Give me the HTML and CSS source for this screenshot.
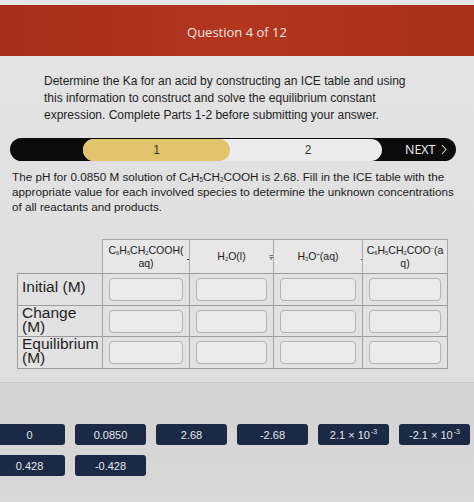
FILE: index.html
```html
<!DOCTYPE html>
<html>
<head>
<meta charset="utf-8">
<link rel="stylesheet" href="styles.css">
</head>
<body>
<div class="page">
  <div class="topstrip"></div>
  <header class="titlebar">Question 4 of 12</header>
  <p class="intro">Determine the Ka for an acid by constructing an ICE table and using this information to construct and solve the equilibrium constant expression. Complete Parts 1-2 before submitting your answer.</p>
  <div class="progress">
    <div class="steps">
      <div class="step active">1</div>
      <div class="step">2</div>
    </div>
    <div class="next">NEXT <svg class="chev" width="6" height="11" viewBox="0 0 6 11"><path d="M1 1 L5 5.5 L1 10" fill="none" stroke="#d8d8d8" stroke-width="1.1"/></svg></div>
  </div>
  <p class="prompt">The pH for 0.0850 M solution of C<sub>6</sub>H<sub>5</sub>CH<sub>2</sub>COOH is 2.68. Fill in the ICE table with the appropriate value for each involved species to determine the unknown concentrations of all reactants and products.</p>
  <div class="ice">
    <div class="blank"></div>
    <div class="hcell"><span class="sp">C<sub>6</sub>H<sub>5</sub>CH<sub>2</sub>COOH(<br>aq)</span><span class="op op-plus">+</span></div>
    <div class="hcell"><span class="sp">H<sub>2</sub>O(l)</span><span class="op op-eq">&#x21CC;</span></div>
    <div class="hcell"><span class="sp">H<sub>3</sub>O<sup>+</sup>(aq)</span><span class="op op-plus2">+</span></div>
    <div class="hcell"><span class="sp">C<sub>6</sub>H<sub>5</sub>CH<sub>2</sub>COO<sup>&minus;</sup>(a<br>q)</span></div>

    <div class="label first">Initial (M)</div>
    <div class="cell"><div class="box"></div></div>
    <div class="cell"><div class="box"></div></div>
    <div class="cell"><div class="box"></div></div>
    <div class="cell"><div class="box"></div></div>

    <div class="label">Change (M)</div>
    <div class="cell"><div class="box"></div></div>
    <div class="cell"><div class="box"></div></div>
    <div class="cell"><div class="box"></div></div>
    <div class="cell"><div class="box"></div></div>

    <div class="label">Equilibrium (M)</div>
    <div class="cell"><div class="box"></div></div>
    <div class="cell"><div class="box"></div></div>
    <div class="cell"><div class="box"></div></div>
    <div class="cell"><div class="box"></div></div>
  </div>
  <div class="bank">
    <div class="tiles">
      <div class="tile">0</div>
      <div class="tile">0.0850</div>
      <div class="tile">2.68</div>
      <div class="tile">-2.68</div>
      <div class="tile">2.1 &times; 10<sup>-3</sup></div>
      <div class="tile">-2.1 &times; 10<sup>-3</sup></div>
      <div class="tile">0.428</div>
      <div class="tile">-0.428</div>
    </div>
  </div>
</div>
</body>
</html>
```

FILE: styles.css
```css
html, body {
  margin: 0;
  padding: 0;
}
body {
  width: 474px;
  height: 502px;
  overflow: hidden;
  background: #dfdfdf;
  font-family: "Liberation Sans", Arial, sans-serif;
  color: #222;
}
.page {
  width: 474px;
  height: 502px;
  display: flex;
  flex-direction: column;
  background: linear-gradient(#e4e4e4, #dcdcdc);
}
.topstrip {
  height: 5px;
  background: #e6e6e6;
}
.titlebar {
  height: 51px;
  background: linear-gradient(90deg, #a62e1b, #b3361f 50%, #a83019);
  color: #f1e6e2;
  font-family: "Open Sans", "Liberation Sans", sans-serif;
  font-size: 13px;
  display: flex;
  align-items: center;
  justify-content: center;
  padding: 3px 0 0 0;
  box-sizing: border-box;
}
.intro {
  margin: 17px 0 0 44px;
  width: 370px;
  font-size: 12px;
  line-height: 17px;
  color: #1e1e1e;
}
.progress {
  margin: 14px 0 0 10px;
  width: 446px;
  height: 23px;
  background: #0c0c0c;
  border-radius: 12px;
  display: flex;
  align-items: center;
  box-sizing: border-box;
  padding-left: 73px;
}
.steps {
  display: flex;
  height: 22px;
  width: 299px;
  background: #ececec;
  border-radius: 11px;
}
.step {
  flex: 0 0 153px;
  display: flex;
  align-items: center;
  justify-content: center;
  font-size: 12px;
  color: #333;
  padding-left: 3px;
  box-sizing: border-box;
}
.step.active {
  flex: 0 0 147px;
  background: #e1c46c;
  border-radius: 11px;
  padding-left: 0;
}
.next {
  margin-left: 23px;
  color: #f4f4f4;
  font-size: 12.5px;
  font-family: "Open Sans", "Liberation Sans", sans-serif;
  display: flex;
  align-items: center;
  gap: 6px;
}
.chev {
  display: block;
}
.prompt {
  margin: 8px 0 0 12px;
  width: 444px;
  font-size: 11.7px;
  line-height: 15px;
  color: #1c1c1c;
}
sub, sup {
  font-size: 0.55em;
  line-height: 0;
  vertical-align: baseline;
  position: relative;
}
sub {
  top: 1px;
}
sup {
  top: -4px;
}
.ice {
  margin: 25px 0 0 17px;
  display: grid;
  grid-template-columns: 85px 87px 84px 89px 86px;
  grid-template-rows: 35px 32px 31px 32px;
  width: 432px;
}
.blank {
  border-bottom: 1px solid #9c9c9c;
}
.hcell {
  position: relative;
  background: #e7e7e7;
  border-top: 1px solid #a8a8a8;
  border-left: 1px solid #a8a8a8;
  border-bottom: 1px solid #9c9c9c;
  display: flex;
  align-items: center;
  justify-content: center;
  text-align: center;
  font-size: 10.5px;
  line-height: 13px;
  color: #222;
}
.hcell:nth-child(5) {
  border-right: 1px solid #a8a8a8;
}
.op {
  position: absolute;
  font-size: 11px;
  color: #333;
}
.op-plus {
  right: -4px;
  top: 13px;
}
.op-eq {
  right: -4px;
  top: 10px;
  font-size: 10px;
  color: #666;
}
.op-plus2 {
  right: -5px;
  top: 13px;
}
.label {
  background: #e2e2e2;
  border-left: 1px solid #9c9c9c;
  border-bottom: 1px solid #9c9c9c;
  font-size: 15.5px;
  line-height: 14px;
  padding: 0 9px 0 4px;
  color: #1e1e1e;
  box-sizing: border-box;
  position: relative;
  z-index: 1;
}
.label.first {
  padding-top: 6px;
}
.cell {
  background: #e2e2e2;
  border-left: 1px solid #a0a0a0;
  border-bottom: 1px solid #9c9c9c;
  padding: 4px 6px;
  box-sizing: border-box;
}
.cell:nth-child(5n) {
  border-right: 1px solid #a0a0a0;
}
.box {
  height: 23px;
  border: 1px solid #b2b2b2;
  border-radius: 4px;
  background: #ebebeb;
  box-sizing: border-box;
}
.bank {
  margin-top: 13px;
  flex: 1;
  border-top: 1px solid #cacaca;
  background: linear-gradient(#d3d3d3, #d8d8d8);
  padding-top: 41px;
  overflow: hidden;
}
.tiles {
  margin-left: -6px;
  display: grid;
  grid-template-columns: repeat(6, 71px);
  column-gap: 10px;
  row-gap: 10px;
}
.tile {
  height: 21px;
  background: #1b2944;
  border-radius: 3px;
  color: #e4e7ee;
  font-size: 11px;
  display: flex;
  align-items: center;
  justify-content: center;
}
.tile sup {
  font-size: 7px;
  top: -3px;
  margin-left: 1px;
}
```
